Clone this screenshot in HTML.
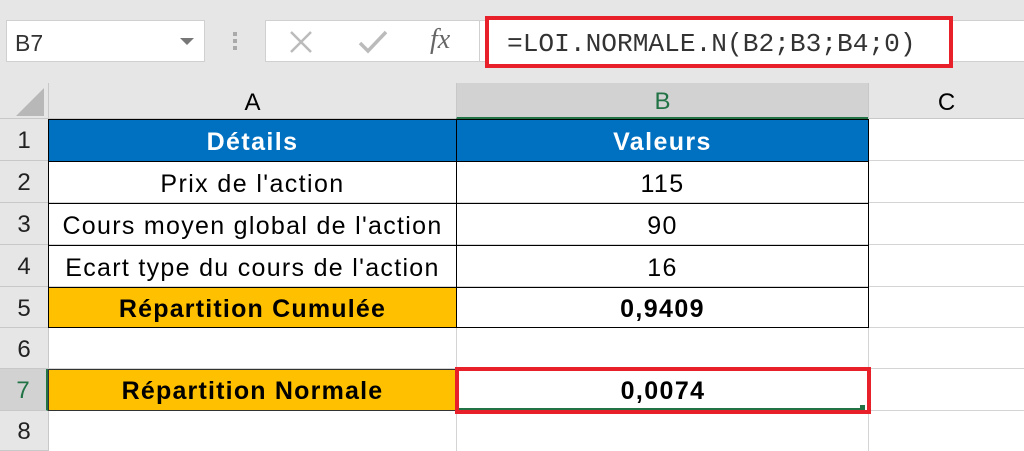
<!DOCTYPE html>
<html><head><meta charset="utf-8"><style>
*{margin:0;padding:0;box-sizing:border-box}
body{width:1024px;height:451px;overflow:hidden;background:#fff;position:relative;font-family:"Liberation Sans",sans-serif}
.a{position:absolute}
.c{position:absolute;display:flex;align-items:center;justify-content:center;font-size:25px;letter-spacing:1.4px;color:#000;padding-top:3px}
.rh{position:absolute;left:0;width:48px;background:#e6e6e6;border-bottom:1px solid #c8c8c8;display:flex;align-items:center;justify-content:center;font-size:24px;color:#222;padding-top:3px}
.hl{position:absolute;height:1px;background:#d4d4d4;left:48px;width:976px}
.vl{position:absolute;width:1px;background:#d4d4d4;top:119px;height:332px}
</style></head><body>
<div class="a" style="left:0;top:0;width:1024px;height:83px;background:#e6e6e6"></div>
<div class="a" style="left:6px;top:20px;width:199px;height:42px;background:#fff;border:1px solid #d0d0d0;font-size:23px;color:#333;padding:9px 0 0 8px">B7</div>
<div class="a" style="left:180px;top:38px;width:0;height:0;border-left:7px solid transparent;border-right:7px solid transparent;border-top:7px solid #777"></div>
<div class="a" style="left:233px;top:32px;width:4px;height:4px;background:#aaa;box-shadow:0 7px 0 #aaa,0 14px 0 #aaa"></div>
<div class="a" style="left:265px;top:20px;width:215px;height:42px;background:#fff;border:1px solid #d0d0d0"></div>
<svg class="a" style="left:288px;top:29px" width="26" height="26"><path d="M3 3L23 23M23 3L3 23" stroke="#bbb" stroke-width="2.5"/></svg>
<svg class="a" style="left:358px;top:29px" width="30" height="26"><path d="M2 14L10 22L28 3" stroke="#bbb" stroke-width="3.5" fill="none"/></svg>
<div class="a" style="left:430px;top:24px;font-family:'Liberation Serif',serif;font-style:italic;font-size:28px;color:#666">fx</div>
<div class="a" style="left:480px;top:20px;width:544px;height:42px;background:#fff;border-top:1px solid #d0d0d0;border-bottom:1px solid #d0d0d0"></div>
<div class="a" style="left:485px;top:16px;width:468px;height:52px;border:4px solid #e8202a;background:#fff"></div>
<div class="a" style="left:507px;top:29px;font-family:'Liberation Mono',monospace;font-size:26.2px;color:#333">=LOI.NORMALE.N(B2;B3;B4;0)</div>
<div class="a" style="left:0;top:83px;width:1024px;height:36px;background:#e6e6e6;border-bottom:1px solid #c8c8c8"></div>
<div class="a" style="left:16px;top:88px;width:0;height:0;border-left:28px solid transparent;border-bottom:28px solid #b8b8b8"></div>
<div class="c" style="left:48px;top:83px;width:408px;height:36px;border-left:1px solid #c8c8c8;letter-spacing:0;font-size:24px">A</div>
<div class="c" style="left:456px;top:83px;width:412px;height:36px;background:#d2d2d2;color:#217346;border-bottom:2px solid #217346;border-left:1px solid #c8c8c8;letter-spacing:0;font-size:24px">B</div>
<div class="c" style="left:868px;top:83px;width:156px;height:36px;border-left:1px solid #c8c8c8;letter-spacing:0;font-size:24px">C</div>
<div class="rh" style="top:119px;height:42px">1</div>
<div class="rh" style="top:161px;height:42px">2</div>
<div class="rh" style="top:203px;height:42px">3</div>
<div class="rh" style="top:245px;height:42px">4</div>
<div class="rh" style="top:287px;height:41px">5</div>
<div class="rh" style="top:328px;height:41px">6</div>
<div class="rh" style="top:369px;height:42px;background:#d2d2d2;color:#217346;border-right:2px solid #217346">7</div>
<div class="rh" style="top:411px;height:40px">8</div>
<div class="a" style="left:48px;top:83px;width:1px;height:368px;background:#c8c8c8"></div>
<div class="hl" style="top:160px"></div><div class="hl" style="top:202px"></div><div class="hl" style="top:244px"></div><div class="hl" style="top:286px"></div><div class="hl" style="top:327px"></div><div class="hl" style="top:368px"></div><div class="hl" style="top:410px"></div>
<div class="vl" style="left:456px"></div><div class="vl" style="left:868px"></div>
<div class="a" style="left:48px;top:119px;width:821px;height:209px;border:1px solid #000"></div>
<div class="c" style="left:49px;top:120px;width:407px;height:41px;background:#0070c0;color:#fff;font-weight:bold">Détails</div>
<div class="c" style="left:457px;top:120px;width:411px;height:41px;background:#0070c0;color:#fff;font-weight:bold">Valeurs</div>
<div class="a" style="left:48px;top:161px;width:821px;height:1px;background:#000"></div>
<div class="a" style="left:48px;top:203px;width:821px;height:1px;background:#000"></div>
<div class="a" style="left:48px;top:245px;width:821px;height:1px;background:#000"></div>
<div class="a" style="left:48px;top:287px;width:821px;height:1px;background:#000"></div>
<div class="a" style="left:456px;top:119px;width:1px;height:209px;background:#000"></div>
<div class="c" style="left:49px;top:162px;width:407px;height:41px">Prix de l'action</div>
<div class="c" style="left:457px;top:162px;width:411px;height:41px">115</div>
<div class="c" style="left:49px;top:204px;width:407px;height:41px;letter-spacing:1.3px">Cours moyen global de l'action</div>
<div class="c" style="left:457px;top:204px;width:411px;height:41px">90</div>
<div class="c" style="left:49px;top:246px;width:407px;height:41px;letter-spacing:1.3px">Ecart type du cours de l'action</div>
<div class="c" style="left:457px;top:246px;width:411px;height:41px">16</div>
<div class="c" style="left:49px;top:288px;width:407px;height:39px;background:#ffc000;font-weight:bold;letter-spacing:1.2px">Répartition Cumulée</div>
<div class="c" style="left:457px;top:288px;width:411px;height:39px;font-weight:bold">0,9409</div>
<div class="c" style="left:48px;top:369px;width:409px;height:42px;background:#ffc000;font-weight:bold;border:1px solid #333;letter-spacing:1.2px">Répartition Normale</div>
<div class="a" style="left:455px;top:367px;width:416px;height:47px;border:4px solid #e8202a;background:#fff"></div>
<div class="a" style="left:459px;top:408px;width:404px;height:2px;background:#217346"></div>
<div class="a" style="left:860px;top:405px;width:5px;height:5px;background:#217346"></div>
<div class="c" style="left:459px;top:371px;width:408px;height:38px;font-weight:bold">0,0074</div>
</body></html>
